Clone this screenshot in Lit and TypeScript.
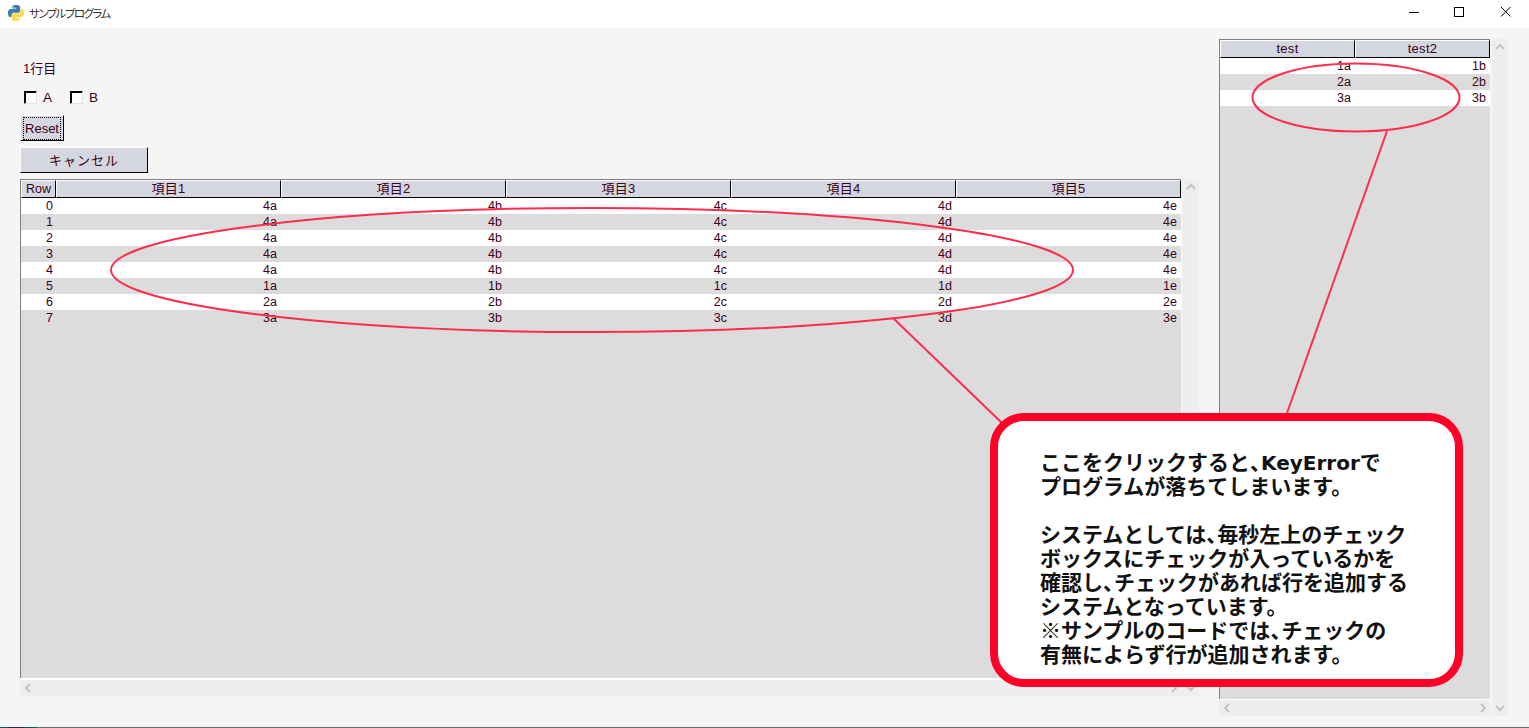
import { LitElement, html, css, svg } from "lit";
import { customElement } from "lit/decorators.js";

const chev = (d: string) => html`<svg class="chev" viewBox="0 0 10 10"><path d=${d} fill="none" stroke="#c4c4c4" stroke-width="2"/></svg>`;
const UP = "M1 7 L5 3 L9 7", DOWN = "M1 3 L5 7 L9 3", LEFT = "M7 1 L3 5 L7 9", RIGHT = "M3 1 L7 5 L3 9";

const leftRows = ["4", "4", "4", "4", "4", "1", "2", "3"];
const comma = html`<span class="comma">、</span>`;
const callout = [
  html`ここをクリックすると${comma}<span class="latin">KeyError</span>で`,
  html`プログラムが落ちてしまいます。`,
  html`\u00a0`,
  html`システムとしては${comma}毎秒左上のチェック`,
  html`ボックスにチェックが入っているかを`,
  html`確認し${comma}チェックがあれば行を追加する`,
  html`システムとなっています。`,
  html`※サンプルのコードでは${comma}チェックの`,
  html`有無によらず行が追加されます。`,
];

@customElement("app-root")
export class AppRoot extends LitElement {
  static styles = css`
    :host { display: block; width: 1529px; height: 728px; position: relative; overflow: hidden;
      font-family: "Liberation Sans", "Noto Sans CJK JP", sans-serif; font-size: 12.5px; color: #3c0020; background: #f5f5f5; }
    .window { display: flex; flex-direction: column; height: 728px; }
    .title { height: 28px; background: #fff; display: flex; align-items: center; padding-left: 8px; flex: none; }
    .title .logo { width: 16px; height: 16px; margin-top: -3px; }
    .title .name { margin-left: 5px; margin-top: -3px; font: 11.5px "Noto Sans CJK JP", sans-serif; font-feature-settings: "palt"; letter-spacing: -1.55px; color: #333; }
    .wbtns { margin-left: auto; display: flex; }
    .wbtn { width: 46px; height: 28px; display: flex; align-items: center; justify-content: center; margin-top: -4px; }
    .wbtn svg { width: 12px; height: 12px; }
    .main { flex: 1; display: flex; min-height: 0; }
    .left { width: 1199px; padding: 32px 0 0 20px; box-sizing: border-box; display: flex; flex-direction: column; align-items: flex-start; }
    .lbl { height: 18px; line-height: 18px; font-size: 13px; padding-left: 3px; }
    .checks { display: flex; align-items: center; height: 18px; margin-top: 10px; padding-left: 4px; }
    .box { width: 13px; height: 13px; box-sizing: border-box; background: #fff; border: 1px solid #000; border-right-color: #e2e2e2; border-bottom-color: #e2e2e2; box-shadow: inset 1px 1px 0 #000; }
    .check { display: flex; align-items: center; gap: 6px; font-size: 13.5px; margin-right: 18px; }
    .btn { box-sizing: border-box; background: #d4d7df; border: 1px solid; border-color: #fff #000 #000 #fff; display: flex; align-items: center; justify-content: center; }
    .reset { width: 44px; height: 26px; margin-top: 9px; font-size: 13px; }
    .reset span { border: 1px dotted #000; padding: 3px 1px 2px; line-height: 16px; }
    .cancel { width: 128px; height: 26px; margin-top: 6px; padding-bottom: 2px; font: 13px "Noto Sans CJK JP", sans-serif; letter-spacing: 1px; }
    .tgrid { display: grid; }
    .tleft { margin-top: 6px; grid-template-columns: 1162px 17px; grid-template-rows: 499px 2px 16px; }
    .tright { grid-template-columns: 272px 16px; grid-template-rows: 660px 1px 16px; column-gap: 1px; }
    .table { background: #dcdcdc; border-top: 1px solid #808080; border-left: 1px solid #808080; box-sizing: border-box; overflow: hidden; display: flex; flex-direction: column; }
    .tright .table { width: 271px; }
    .tleft .table { width: 1161px; }
    .row { display: flex; height: 16px; line-height: 17px; background: #fff; flex: none; }
    .row:nth-child(even) { background: #dcdcdc; }
    .head { display: flex; height: 18px; flex: none; }
    .th { box-sizing: border-box; height: 18px; line-height: 16px; background: #d4d7df; border: 1px solid; border-color: #fff #000 #000 #fff; text-align: center; font-size: 13px; letter-spacing: .3px; }
    .th.c-row { font-size: 12.5px; letter-spacing: 0; }
    .td { box-sizing: border-box; text-align: right; padding-right: 4px; }
    .c-row { width: 35px; }
    .c-5 { width: 225px; }
    .c-2 { width: 135px; }
    .td.c-row { padding-right: 3px; }
    .sb { background: #eeeeee; display: flex; }
    .sbv { flex-direction: column; justify-content: space-between; align-items: center; padding: 3px 0; box-sizing: border-box; grid-row: 1 / span 3; grid-column: 2; }
    .sbh { justify-content: space-between; align-items: center; padding: 0 3px; box-sizing: border-box; grid-row: 3; grid-column: 1; }
    .chev { width: 10px; height: 10px; display: block; }
    .gapw { background: #fff; grid-row: 2; grid-column: 1; }
    .right { margin-left: 20px; padding-top: 11px; }
    .strip { height: 1px; flex: none; background: linear-gradient(90deg, #16525c 0 8px, #2a2550 8px 25px, #16525c 25px 37px, #6c6c6c 37px); }
    .anno { position: absolute; left: 0; top: 0; width: 1529px; height: 728px; pointer-events: none; }
    .callout { position: absolute; left: 990px; top: 413px; width: 473px; height: 274px; box-sizing: border-box; background: #fff; border: 8px solid #ff0027; border-radius: 34px; padding: 28px 0 0 42px;
      font: bold 21px/24px "Noto Sans CJK JP", sans-serif; color: #111; white-space: nowrap; }
    .callout div { height: 24px; }
    .comma { letter-spacing: -10px; }
    .latin { font-family: "DejaVu Sans", sans-serif; font-size: 20px; }
  `;

  private table(cols: string[], wClass: string, rows: string[][], rowNums: boolean) {
    return html`<div class="table">
      <div class="head">
        ${rowNums ? html`<div class="th c-row">Row</div>` : ""}
        ${cols.map((c) => html`<div class="th ${wClass}">${c}</div>`)}
      </div>
      <div>
        ${rows.map((r, i) => html`<div class="row">
          ${rowNums ? html`<div class="td c-row">${i}</div>` : ""}
          ${r.map((v) => html`<div class="td ${wClass}">${v}</div>`)}
        </div>`)}
      </div>
    </div>`;
  }

  render() {
    const lrows = leftRows.map((n) => ["a", "b", "c", "d", "e"].map((s) => n + s));
    const rrows = ["1", "2", "3"].map((n) => [n + "a", n + "b"]);
    return html`
      <div class="window">
        <div class="title">
          <svg class="logo" viewBox="0 0 24 24">
            <path fill="#3f7cb0" d="M12 0C6 0 6.4 2.6 6.4 2.6v2.7h5.7v.8H4.1S0 5.7 0 12s3.5 6 3.5 6h2.1v-2.9s-.1-3.5 3.5-3.5h5.8s3.4.1 3.4-3.3V3.3S18.4 0 12 0z"/>
            <path fill="#ffd94f" d="M12 24c6 0 5.6-2.6 5.6-2.6v-2.7h-5.7v-.8h8s4.1.5 4.1-5.9-3.5-6-3.5-6h-2.1v2.9s.1 3.5-3.5 3.5H9s-3.4-.1-3.4 3.3v5.6S5.6 24 12 24z"/>
            <circle cx="8.8" cy="3.3" r="1" fill="#fff"/><circle cx="15.2" cy="20.7" r="1" fill="#fff"/>
          </svg>
          <span class="name">サンプルプログラム</span>
          <div class="wbtns">
            <div class="wbtn"><svg viewBox="0 0 12 12"><path d="M1 6.5H11" stroke="#000" fill="none"/></svg></div>
            <div class="wbtn"><svg viewBox="0 0 12 12"><rect x=".5" y="1.5" width="9" height="9" stroke="#000" fill="none"/></svg></div>
            <div class="wbtn"><svg viewBox="0 0 12 12"><path d="M1 1L10.5 10.5M10.5 1L1 10.5" stroke="#000" fill="none"/></svg></div>
          </div>
        </div>
        <div class="main">
          <div class="left">
            <div class="lbl">1行目</div>
            <div class="checks">
              <label class="check"><span class="box"></span>A</label>
              <label class="check"><span class="box"></span>B</label>
            </div>
            <div class="btn reset"><span>Reset</span></div>
            <div class="btn cancel">キャンセル</div>
            <div class="tgrid tleft">
              ${this.table(["項目1", "項目2", "項目3", "項目4", "項目5"], "c-5", lrows, true)}
              <div class="gapw"></div>
              <div class="sb sbh">${chev(LEFT)}${chev(RIGHT)}</div>
              <div class="sb sbv">${chev(UP)}${chev(DOWN)}</div>
            </div>
          </div>
          <div class="right">
            <div class="tgrid tright">
              ${this.table(["test", "test2"], "c-2", rrows, false)}
              <div class="gapw"></div>
              <div class="sb sbh">${chev(LEFT)}${chev(RIGHT)}</div>
              <div class="sb sbv">${chev(UP)}${chev(DOWN)}</div>
            </div>
          </div>
        </div>
        <div class="strip"></div>
      </div>
      <svg class="anno" viewBox="0 0 1529 728">
        ${svg`<g fill="none" stroke="#ff2c4e" stroke-width="2">
          <ellipse cx="592" cy="270" rx="481" ry="62"/>
          <ellipse cx="1356" cy="97.5" rx="103.5" ry="34"/>
          <path d="M893 318L1002 423"/>
          <path d="M1387 131L1286 416"/>
        </g>`}
      </svg>
      <div class="callout">${callout.map((l) => html`<div>${l}</div>`)}</div>
    `;
  }
}
